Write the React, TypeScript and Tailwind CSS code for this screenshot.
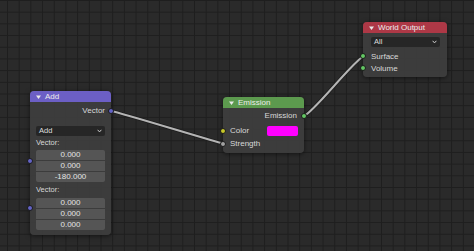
import type { ReactNode } from 'react';

function Triangle() {
  return (
    <svg width="5" height="4" viewBox="0 0 5 4" className="shrink-0">
      <polygon points="0,0.5 5,0.5 2.5,4" fill="#e8e8e8" />
    </svg>
  );
}

function Chevron() {
  return (
    <svg width="5" height="4" viewBox="0 0 5 4">
      <polyline points="0.6,0.8 2.5,2.9 4.4,0.8" fill="none" stroke="#cfcfcf" strokeWidth="1" />
    </svg>
  );
}

function Header({ color, title }: { color: string; title: string }) {
  return (
    <div className={`flex h-[11px] items-center gap-[4px] rounded-t-[4px] pl-[6px] text-[8px] text-[#ececec] ${color}`}>
      <Triangle />
      <span>{title}</span>
    </div>
  );
}

function Dropdown({ label, className }: { label: string; className: string }) {
  return (
    <div className={`flex h-[10px] items-center justify-between rounded-[2px] bg-[#262626] px-[3px] text-[7.5px] text-[#dedede] ${className}`}>
      <span>{label}</span>
      <Chevron />
    </div>
  );
}

function Fields({ values, className }: { values: string[]; className: string }) {
  return (
    <div className={`flex flex-col gap-px overflow-hidden rounded-[2px] ${className}`}>
      {values.map((v, i) => (
        <div key={i} className="flex h-[10px] items-center justify-center bg-[#555555] text-[8px] text-[#e4e4e4]">
          {v}
        </div>
      ))}
    </div>
  );
}

// sockets sit on the node edge, over the border
function Socket({ className }: { className: string }) {
  return (
    <div
      className={`absolute h-[6px] w-[6px] -translate-x-1/2 -translate-y-1/2 rounded-full border border-[#1a1a1a] ${className}`}
    />
  );
}

function Node({ className, children }: { className: string; children: ReactNode }) {
  return (
    <div className={`absolute rounded-[4px] bg-[#3d3d3d]/95 shadow-[0_1px_5px_rgba(0,0,0,0.55)] ${className}`}>
      {children}
    </div>
  );
}

export default function App() {
  return (
    <div className="relative h-[251px] w-[474px] overflow-hidden bg-[#2a2a2a] bg-[linear-gradient(to_right,#1e1e1e_1px,transparent_1px),linear-gradient(to_bottom,#1e1e1e_1px,transparent_1px)] bg-[size:11.7px_11.7px] bg-[position:7px_0px] font-['Liberation_Sans',Arial,sans-serif] text-[#d8d8d8]">
      {/* wires */}
      <svg className="absolute inset-0" width="474" height="251" viewBox="0 0 474 251">
        <g fill="none" strokeLinecap="round">
          <path d="M111,111 C122,113 212,141 223,143.5" stroke="#1c1c1c" strokeWidth="3.5" />
          <path d="M111,111 C122,113 212,141 223,143.5" stroke="#b4b4b4" strokeWidth="2" />
          <path d="M304,116 C314,112 354,60 364,56" stroke="#1c1c1c" strokeWidth="3.5" />
          <path d="M304,116 C314,112 354,60 364,56" stroke="#b4b4b4" strokeWidth="2" />
        </g>
      </svg>

      {/* Add */}
      <Node className="left-[30px] top-[91px] w-[81px]">
        <Header color="bg-[#6c5fc5]" title="Add" />
        <div className="px-[6px] pb-[5px] pt-[3px] text-[8px]">
          <div className="flex h-[12px] items-center justify-end">Vector</div>
          <Dropdown label="Add" className="mt-[9px]" />
          <div className="mt-[2px] flex h-[10px] items-center text-[7.5px]">Vector:</div>
          <Fields values={['0.000', '0.000', '-180.000']} className="mt-[2px]" />
          <div className="mt-[3px] flex h-[10px] items-center text-[7.5px]">Vector:</div>
          <Fields values={['0.000', '0.000', '0.000']} className="mt-[3px]" />
        </div>
        <Socket className="left-full top-[20px] bg-[#6363c7]" />
        <Socket className="left-0 top-[70px] bg-[#6363c7]" />
        <Socket className="left-0 top-[117px] bg-[#6363c7]" />
      </Node>

      {/* Emission */}
      <Node className="left-[223px] top-[97px] w-[81px]">
        <Header color="bg-[#5c9a4e]" title="Emission" />
        <div className="pb-[3px] pt-[2px] text-[8px]">
          <div className="flex h-[12px] items-center justify-end pr-[7px]">Emission</div>
          <div className="mt-[3px] flex h-[12px] items-center justify-between pl-[7px] pr-[6px]">
            <span>Color</span>
            <div className="h-[10px] w-[31px] rounded-[2px] bg-[#ff00ff]" />
          </div>
          <div className="mt-[1px] flex h-[12px] items-center pl-[7px]">Strength</div>
        </div>
        <Socket className="left-full top-[19px] bg-[#63c763]" />
        <Socket className="left-0 top-[34px] bg-[#c7c729]" />
        <Socket className="left-0 top-[47px] bg-[#a1a1a1]" />
      </Node>

      {/* World Output */}
      <Node className="left-[363px] top-[22px] w-[84px]">
        <Header color="bg-[#ad3846]" title="World Output" />
        <div className="pb-[2px] pt-[4px] text-[8px]">
          <Dropdown label="All" className="ml-[8px] mr-[7px]" />
          <div className="mt-[4px] flex h-[12px] items-center pl-[8px]">Surface</div>
          <div className="flex h-[12px] items-center pl-[8px]">Volume</div>
        </div>
        <Socket className="left-0 top-[34px] bg-[#63c763]" />
        <Socket className="left-0 top-[46px] bg-[#63c763]" />
      </Node>
    </div>
  );
}
